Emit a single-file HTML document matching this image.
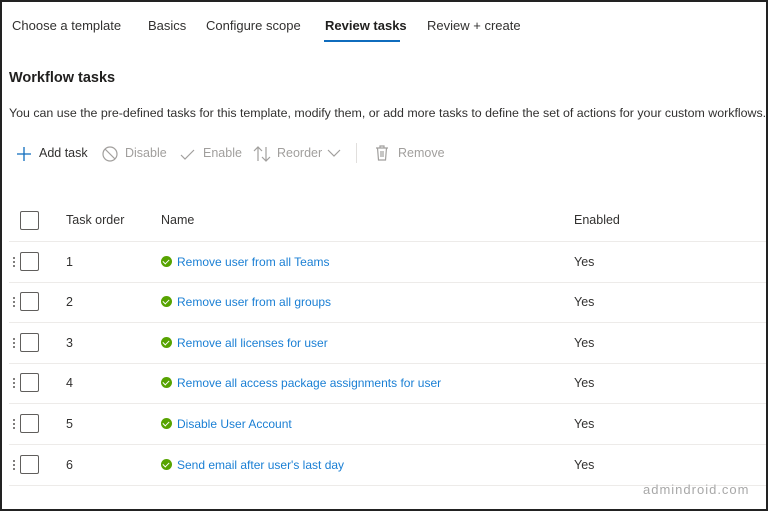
<!DOCTYPE html>
<html><head><style>
body{margin:0;width:768px;height:511px;overflow:hidden;background:#fff;font-family:"Liberation Sans",sans-serif;color:#323130}
.frame{position:absolute;left:0;top:0;width:764px;height:507px;border:2px solid #222}
.a{position:absolute;white-space:nowrap}
.tab{top:18px;font-size:13px;color:#323130}
.sep{position:absolute;left:9px;right:2px;height:1px;background:#edebe9}
.cb{position:absolute;width:17px;height:17px;border:1px solid #605e5c;border-radius:2px;background:#fff}
.dots{position:absolute;width:2px;height:12px;background:radial-gradient(circle,#605e5c 0.9px,transparent 1.1px) 0 0/2px 4px}
.lnk{font-size:12px;color:#1a7fd4}
.ck{display:inline-block;width:11px;height:11px;border-radius:50%;background:#57a300;vertical-align:-1px;margin-right:5px;position:relative}
.ck:after{content:"";position:absolute;left:3px;top:2px;width:3px;height:5px;border:solid #fff;border-width:0 1.5px 1.5px 0;transform:rotate(45deg)}
.cell{font-size:12.5px;color:#323130}
.tb{top:146px;font-size:12.5px;color:#a19f9d}
</style></head><body>
<div class="frame"></div>
<div class="a tab" style="left:12px">Choose a template</div>
<div class="a tab" style="left:148px">Basics</div>
<div class="a tab" style="left:206px">Configure scope</div>
<div class="a tab" style="left:325px;font-weight:600;color:#201f1e">Review tasks</div>
<div class="a" style="left:324px;top:40px;width:76px;height:2px;background:#0f6cbd"></div>
<div class="a tab" style="left:427px">Review + create</div>
<div class="a" style="left:9px;top:70px;font-size:14.5px;font-weight:bold;color:#201f1e">Workflow tasks</div>
<div class="a" style="left:9px;top:106px;font-size:12.4px">You can use the pre-defined tasks for this template, modify them, or add more tasks to define the set of actions for your custom workflows.</div>
<svg class="a" style="left:15px;top:145px" width="18" height="18"><path d="M9 2v14M2 9h14" stroke="#0f6cbd" stroke-width="1.3"/></svg>
<div class="a tb" style="left:39px;color:#323130">Add task</div>
<svg class="a" style="left:101px;top:145px" width="18" height="18"><circle cx="9" cy="9" r="7" fill="none" stroke="#a19f9d" stroke-width="1.2"/><path d="M4 4l10 10" stroke="#a19f9d" stroke-width="1.2"/></svg>
<div class="a tb" style="left:125px">Disable</div>
<svg class="a" style="left:179px;top:145px" width="16" height="18"><path d="M2 10l4 4 9-9" fill="none" stroke="#a19f9d" stroke-width="1.2"/></svg>
<div class="a tb" style="left:203px">Enable</div>
<svg class="a" style="left:253px;top:144px" width="18" height="20"><path d="M5 17V3M1 7l4-4 4 4M13 3v14M9 13l4 4 4-4" fill="none" stroke="#a19f9d" stroke-width="1.2"/></svg>
<div class="a tb" style="left:277px">Reorder</div>
<svg class="a" style="left:327px;top:148px" width="14" height="10"><path d="M1 2l6 6 6-6" fill="none" stroke="#a19f9d" stroke-width="1.2"/></svg>
<div class="a" style="left:356px;top:143px;width:1px;height:20px;background:#e1dfdd"></div>
<svg class="a" style="left:374px;top:144px" width="16" height="18"><path d="M2 4h12M6 4V2h4v2M3.5 4l1 12h7l1-12M7 7v6M9 7v6" fill="none" stroke="#a19f9d" stroke-width="1.2"/></svg>
<div class="a tb" style="left:398px">Remove</div>
<div class="cb" style="left:20px;top:211px"></div>
<div class="a cell" style="left:66px;top:213px">Task order</div>
<div class="a cell" style="left:161px;top:213px">Name</div>
<div class="a cell" style="left:574px;top:213px">Enabled</div>
<div class="sep" style="top:241px"></div>

<div class="dots a" style="left:13px;top:256px"></div><div class="cb" style="left:20px;top:252px"></div>
<div class="a cell" style="left:66px;top:255px">1</div>
<div class="a lnk" style="left:161px;top:255px"><span class="ck"></span>Remove user from all Teams</div>
<div class="a cell" style="left:574px;top:255px">Yes</div>
<div class="sep" style="top:282px"></div>

<div class="dots a" style="left:13px;top:296px"></div><div class="cb" style="left:20px;top:292px"></div>
<div class="a cell" style="left:66px;top:295px">2</div>
<div class="a lnk" style="left:161px;top:295px"><span class="ck"></span>Remove user from all groups</div>
<div class="a cell" style="left:574px;top:295px">Yes</div>
<div class="sep" style="top:322px"></div>

<div class="dots a" style="left:13px;top:337px"></div><div class="cb" style="left:20px;top:333px"></div>
<div class="a cell" style="left:66px;top:336px">3</div>
<div class="a lnk" style="left:161px;top:336px"><span class="ck"></span>Remove all licenses for user</div>
<div class="a cell" style="left:574px;top:336px">Yes</div>
<div class="sep" style="top:363px"></div>

<div class="dots a" style="left:13px;top:377px"></div><div class="cb" style="left:20px;top:373px"></div>
<div class="a cell" style="left:66px;top:376px">4</div>
<div class="a lnk" style="left:161px;top:376px"><span class="ck"></span>Remove all access package assignments for user</div>
<div class="a cell" style="left:574px;top:376px">Yes</div>
<div class="sep" style="top:403px"></div>

<div class="dots a" style="left:13px;top:418px"></div><div class="cb" style="left:20px;top:414px"></div>
<div class="a cell" style="left:66px;top:417px">5</div>
<div class="a lnk" style="left:161px;top:417px"><span class="ck"></span>Disable User Account</div>
<div class="a cell" style="left:574px;top:417px">Yes</div>
<div class="sep" style="top:444px"></div>

<div class="dots a" style="left:13px;top:459px"></div><div class="cb" style="left:20px;top:455px"></div>
<div class="a cell" style="left:66px;top:458px">6</div>
<div class="a lnk" style="left:161px;top:458px"><span class="ck"></span>Send email after user's last day</div>
<div class="a cell" style="left:574px;top:458px">Yes</div>
<div class="sep" style="top:485px"></div>
<div class="a" style="left:643px;top:482px;font-size:13px;color:#a8a8a8;letter-spacing:1px">admindroid.com</div>
</body></html>
